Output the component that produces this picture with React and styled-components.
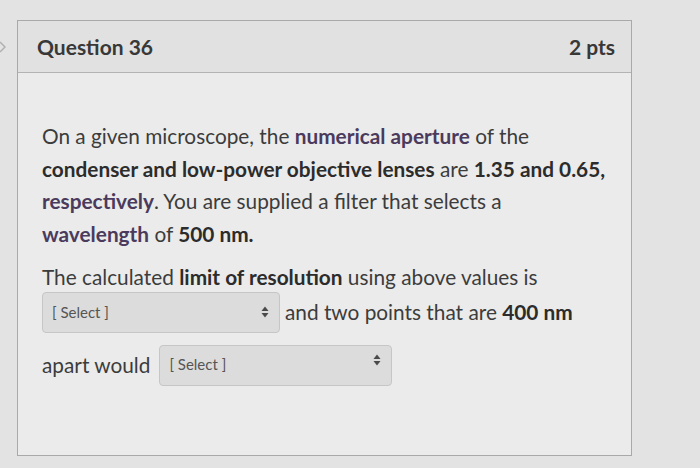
import React from "react";
import styled, { createGlobalStyle } from "styled-components";

const GlobalStyle = createGlobalStyle`
  html, body {
    margin: 0;
    padding: 0;
    background: #e3e3e3;
    font-family: Lato, "Open Sans", sans-serif;
  }
`;

const Page = styled.div`
  position: relative;
  width: 700px;
  height: 468px;
  padding: 20px 0 0 17px;
  box-sizing: border-box;
  overflow: hidden;
`;

const SideChevron = styled.svg`
  position: absolute;
  left: 0;
  top: 41px;
`;

const Card = styled.div`
  width: 615px;
  height: 436px;
  box-sizing: border-box;
  border: 1px solid #a9a9a9;
  background: #ebebeb;
  display: flex;
  flex-direction: column;
`;

const Header = styled.div`
  height: 52px;
  box-sizing: border-box;
  display: flex;
  align-items: center;
  justify-content: space-between;
  padding: 0 16px 0 19px;
  background: #e1e1e1;
  border-bottom: 1px solid #b3b3b3;
`;

const HeaderText = styled.span`
  font-size: 21px;
  font-weight: 700;
  color: #383838;
`;

const Body = styled.div`
  padding: 47px 16px 0 24px;
  font-size: 20.8px;
  line-height: 32.5px;
  color: #3c3c3c;
`;

const Paragraph = styled.p`
  margin: 0 0 11px;
`;

const Strong = styled.b`
  font-weight: 700;
  color: ${(p) => (p.$accent ? "#4a3a5c" : "#2c2c2c")};
`;

const Row = styled.div`
  display: flex;
  align-items: center;
  gap: ${(p) => p.$gap || 5}px;
  margin-top: ${(p) => p.$top || 0}px;
`;

const SelectBox = styled.div`
  width: ${(p) => p.$width}px;
  height: 41px;
  box-sizing: border-box;
  border: 1px solid #c6c6c6;
  border-radius: 4px;
  background: #dcdcdc;
  display: flex;
  align-items: center;
  justify-content: space-between;
  padding: 0 10px 0 9px;
  ${(p) => p.$raise && "align-items: flex-start; padding-top: 8px;"}
`;

const SelectLabel = styled.span`
  font-size: 15px;
  line-height: 20px;
  color: #555;
`;

const Arrows = () => (
  <svg width="8" height="12" viewBox="0 0 8 12">
    <path d="M4 0.5 L7.5 5 L0.5 5 Z" fill="#4a4a4a" />
    <path d="M4 11.5 L7.5 7 L0.5 7 Z" fill="#4a4a4a" />
  </svg>
);

const Select = ({ width, raise }) => (
  <SelectBox $width={width} $raise={raise}>
    <SelectLabel>[ Select ]</SelectLabel>
    <Arrows />
  </SelectBox>
);

export default function App() {
  return (
    <>
      <GlobalStyle />
      <Page>
        <SideChevron width="6" height="12" viewBox="0 0 6 12">
          <path d="M0 1 L5 6 L0 11" fill="none" stroke="#b0b0b0" strokeWidth="1.5" />
        </SideChevron>
        <Card>
          <Header>
            <HeaderText>Question 36</HeaderText>
            <HeaderText>2 pts</HeaderText>
          </Header>
          <Body>
            <Paragraph>
              On a given microscope, the <Strong $accent>numerical aperture</Strong> of the
              <br />
              <Strong>condenser and low-power objective lenses</Strong> are{" "}
              <Strong>1.35 and 0.65,</Strong>
              <br />
              <Strong $accent>respectively</Strong>. You are supplied a filter that selects a
              <br />
              <Strong $accent>wavelength</Strong> of <Strong>500 nm.</Strong>
            </Paragraph>
            <Paragraph>
              The calculated <Strong>limit of resolution</Strong> using above values is
            </Paragraph>
            <Row $top={-13}>
              <Select width={238} />
              <span>
                and two points that are <Strong>400 nm</Strong>
              </span>
            </Row>
            <Row $top={12} $gap={9}>
              <span>apart would</span>
              <Select width={233} raise />
            </Row>
          </Body>
        </Card>
      </Page>
    </>
  );
}
